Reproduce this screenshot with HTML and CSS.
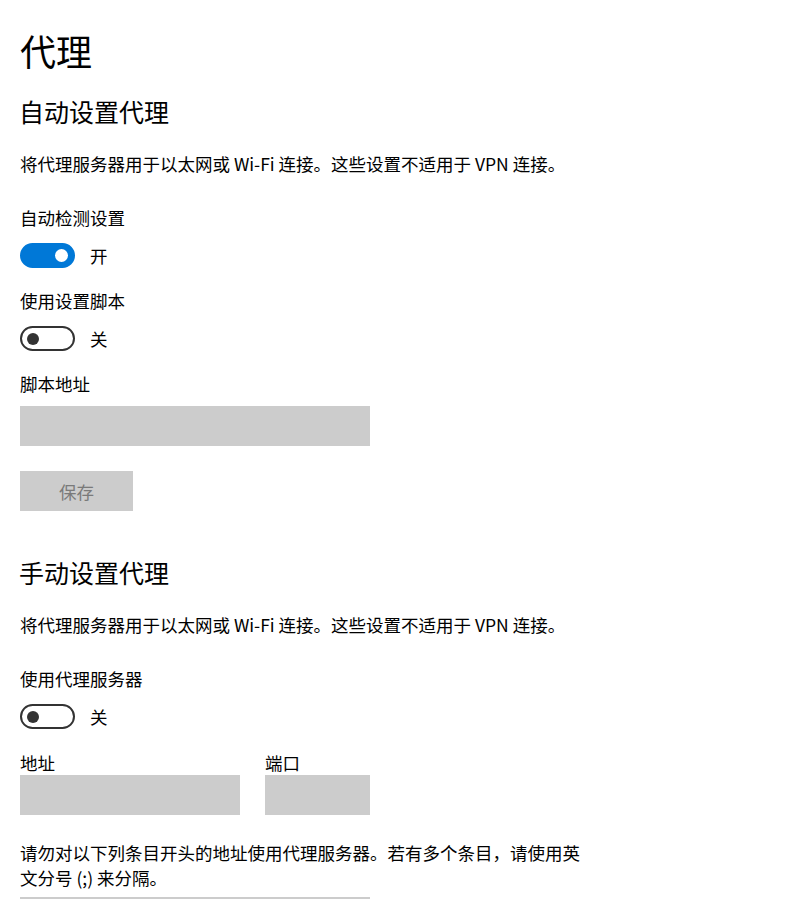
FILE: index.html
```html
<!DOCTYPE html>
<html lang="zh-CN">
<head>
  <meta charset="UTF-8" />
  <meta name="viewport" content="width=device-width, initial-scale=1" />
  <title>代理</title>
  <link rel="stylesheet" href="styles.css">
</head>
<body>
  <h1>代理</h1>

  <h2 class="section-title">自动设置代理</h2>
  <p class="desc">将代理服务器用于以太网或 Wi-Fi 连接。这些设置不适用于 VPN 连接。</p>

  <div class="label first">自动检测设置</div>
  <div class="toggle-row">
    <div class="toggle on"><span class="knob"></span></div>
    <span class="toggle-text">开</span>
  </div>

  <div class="label">使用设置脚本</div>
  <div class="toggle-row">
    <div class="toggle"><span class="knob"></span></div>
    <span class="toggle-text">关</span>
  </div>

  <div class="label">脚本地址</div>
  <input class="field script-field" type="text" disabled>

  <button class="save-btn" disabled>保存</button>

  <h2 class="section-title manual">手动设置代理</h2>
  <p class="desc">将代理服务器用于以太网或 Wi-Fi 连接。这些设置不适用于 VPN 连接。</p>

  <div class="label first">使用代理服务器</div>
  <div class="toggle-row">
    <div class="toggle"><span class="knob"></span></div>
    <span class="toggle-text">关</span>
  </div>

  <div class="address-row">
    <div class="address-col">
      <div class="label tight">地址</div>
      <input class="field" type="text" disabled>
    </div>
    <div class="port-col">
      <div class="label tight">端口</div>
      <input class="field" type="text" disabled>
    </div>
  </div>

  <p class="help">请勿对以下列条目开头的地址使用代理服务器。若有多个条目，请使用英文分号 (;) 来分隔。</p>
  <textarea class="exceptions"></textarea>
</body>
</html>
```

FILE: styles.css
```css
body {
  font-family: "Microsoft YaHei", "Noto Sans CJK SC", sans-serif;
  font-size: 17.5px;
  color: #000;
  background: #fff;
  margin: 0;
  padding: 0 20px;
}
h1 {
  font-size: 36px;
  font-weight: 400;
  line-height: 44px;
  margin: 28px 0 0;
}
.section-title {
  font-size: 25px;
  font-weight: 400;
  line-height: 32px;
  margin: 23px 0 0 -1px;
}
.section-title.manual {
  margin-top: 45px;
}
.desc {
  line-height: 24px;
  margin: 25px 0 0;
}
.label {
  line-height: 24px;
  margin-top: 21px;
}
.label.first {
  margin-top: 30px;
}
.label.tight {
  margin-top: 0;
}
.toggle-row {
  display: flex;
  align-items: center;
  margin-top: 13px;
  height: 25px;
}
.toggle {
  width: 55px;
  height: 25px;
  box-sizing: border-box;
  border-radius: 13px;
  border: 2px solid #333;
  display: flex;
  align-items: center;
  padding: 0 5px;
}
.toggle .knob {
  width: 12px;
  height: 12px;
  border-radius: 50%;
  background: #333;
}
.toggle.on {
  background: #0078d7;
  border-color: #0078d7;
  justify-content: flex-end;
}
.toggle.on .knob {
  background: #fff;
  width: 13px;
  height: 13px;
}
.toggle-text {
  margin-left: 15px;
  line-height: 24px;
}
.field {
  display: block;
  box-sizing: border-box;
  height: 40px;
  border: none;
  background: #ccc;
  margin: 0;
  padding: 0;
}
.script-field {
  width: 350px;
  margin-top: 10px;
}
.save-btn {
  display: block;
  width: 113px;
  height: 40px;
  margin-top: 25px;
  border: none;
  background: #ccc;
  color: #7a7a7a;
  font-family: inherit;
  font-size: 17.5px;
  padding: 0;
}
.address-row {
  display: flex;
  gap: 25px;
  margin-top: 22px;
}
.address-col .field {
  width: 220px;
}
.port-col .field {
  width: 105px;
}
.help {
  width: 570px;
  line-height: 25px;
  margin: 25px 0 0;
}
.exceptions {
  display: block;
  width: 350px;
  height: 80px;
  box-sizing: border-box;
  border: 2px solid #ccc;
  margin-top: 7px;
  resize: none;
}
```
